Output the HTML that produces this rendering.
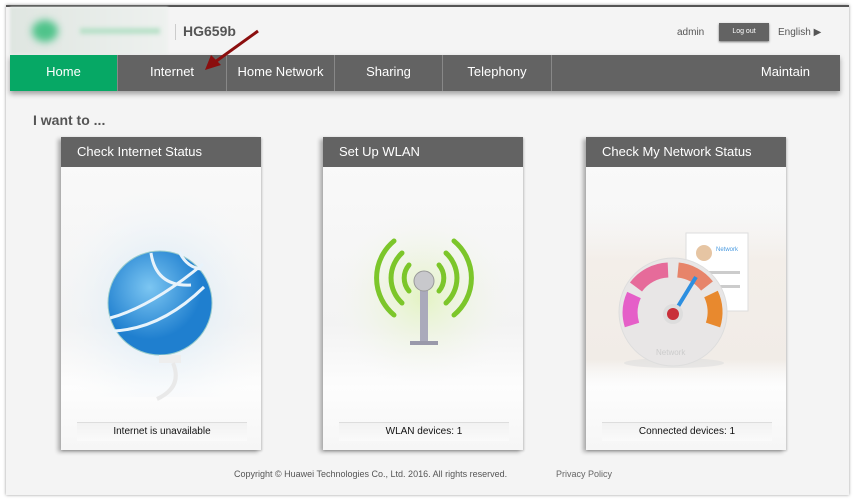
<!DOCTYPE html>
<html><head><meta charset="utf-8"><style>
*{margin:0;padding:0;box-sizing:border-box}
body{width:855px;height:503px;background:#fff;font-family:"Liberation Sans",sans-serif;position:relative;overflow:hidden}
.frame{position:absolute;left:6px;top:5px;width:843px;height:490px;background:#f4f4f4;border-top:2px solid #555;box-shadow:0 0 3px #999}
.a{position:absolute}
.nav{left:10px;top:55px;width:830px;height:36px;background:#636363;box-shadow:0 3px 5px rgba(0,0,0,.35)}
.nav div{position:absolute;top:0;height:36px;line-height:34px;color:#fff;font-size:13px;text-align:center;border-right:1px solid #888}
.card{position:absolute;top:137px;width:200px;height:313px;background:linear-gradient(#fafafa,#f3f3f3 60%,#fdfdfd 80%,#f6f6f6);box-shadow:-3px 2px 4px rgba(0,0,0,.3),1px 1px 2px rgba(0,0,0,.2)}
.card .h{height:30px;background:#636363;color:#fff;font-size:13px;line-height:29px;padding-left:16px}
.card .s{position:absolute;left:16px;top:285px;width:170px;height:19px;border-top:1px solid #ddd;background:linear-gradient(#f2f2f2,#fafafa);font-size:10px;text-align:center;line-height:18px;color:#111}
.card svg{position:absolute;left:0;top:30px}
</style></head><body>
<div class="frame"></div>
<div class="a" style="left:10px;top:7px;width:158px;height:47px;background:linear-gradient(90deg,#dfe6e1,#eef1ef);filter:blur(1px)"></div>
<div class="a" style="left:32px;top:20px;width:26px;height:22px;border-radius:50%;background:#4fc38a;filter:blur(4px)"></div>
<div class="a" style="left:80px;top:28px;width:80px;height:6px;background:#b8e0c8;filter:blur(2px)"></div>
<div class="a" style="left:175px;top:24px;width:1px;height:16px;background:#ccc"></div>
<div class="a" style="left:183px;top:23px;font-size:14px;font-weight:bold;color:#555">HG659b</div>
<div class="a" style="left:677px;top:27px;font-size:10px;color:#555">admin</div>
<div class="a" style="left:719px;top:23px;width:50px;height:18px;background:#636363;color:#fff;font-size:7px;text-align:center;line-height:18px;box-shadow:0 1px 2px #777">Log out</div>
<div class="a" style="left:778px;top:27px;font-size:10px;color:#555">English &#9654;</div>
<div class="a nav">
<div style="left:0;width:108px;background:#06a865">Home</div>
<div style="left:108px;width:109px">Internet</div>
<div style="left:217px;width:108px">Home Network</div>
<div style="left:325px;width:108px">Sharing</div>
<div style="left:433px;width:109px">Telephony</div>
<div style="left:542px;width:288px;text-align:right;padding-right:30px;border:0">Maintain</div>
</div>
<svg class="a" style="left:195px;top:28px" width="70" height="50"><line x1="63" y1="3" x2="20" y2="34" stroke="#8b0e0e" stroke-width="3"/><polygon points="10,42 16,27 26,37" fill="#8b0e0e"/></svg>
<div class="a" style="left:33px;top:112px;font-size:14px;font-weight:bold;color:#555">I want to ...</div>

<div class="card" style="left:61px"><div class="h">Check Internet Status</div>
<svg width="200" height="250"><defs><radialGradient id="g1" cx="40%" cy="35%"><stop offset="0" stop-color="#7cc6f2"/><stop offset="1" stop-color="#1f7fcf"/></radialGradient><radialGradient id="b1" cx="50%" cy="55%" r="60%"><stop offset="0" stop-color="#cfe6f7"/><stop offset="1" stop-color="#fafafa" stop-opacity="0"/></radialGradient></defs>
<rect x="0" y="20" width="200" height="210" fill="url(#b1)"/>
<circle cx="99" cy="136" r="52" fill="url(#g1)" stroke="#9cc" stroke-width="1"/>
<path d="M49 151 Q90 140 142 97 M52 164 Q100 162 143 120 M90 86 Q95 120 130 118 M118 84 Q125 100 140 102" stroke="#e8f3fb" stroke-width="3" fill="none"/>
<rect x="98" y="188" width="22" height="8" fill="#eee"/>
<path d="M112 196 Q122 220 96 232" stroke="#e9e9e9" stroke-width="4" fill="none"/></svg>
<div class="s">Internet is unavailable</div></div>

<div class="card" style="left:323px"><div class="h">Set Up WLAN</div>
<svg width="200" height="250"><defs><radialGradient id="b2" cx="50%" cy="50%"><stop offset="0" stop-color="#e3f3c2"/><stop offset="1" stop-color="#f6f6f6" stop-opacity="0"/></radialGradient></defs>
<ellipse cx="100" cy="130" rx="95" ry="90" fill="url(#b2)"/>
<g stroke="#7cc62a" stroke-width="5" fill="none" stroke-linecap="round"><path d="M86 124 A20 20 0 0 1 86 98"/><path d="M79 136 A34 34 0 0 1 79 86"/><path d="M71 148 A48 48 0 0 1 71 74"/><path d="M116 124 A20 20 0 0 0 116 98"/><path d="M123 136 A34 34 0 0 0 123 86"/><path d="M131 148 A48 48 0 0 0 131 74"/></g>
<rect x="97" y="115" width="8" height="60" fill="#aab"/><rect x="87" y="174" width="28" height="4" fill="#99a"/>
<circle cx="101" cy="114" r="10" fill="#c8c8cc" stroke="#999"/></svg>
<div class="s">WLAN devices: 1</div></div>

<div class="card" style="left:586px"><div class="h">Check My Network Status</div>
<svg width="200" height="250"><defs><linearGradient id="b3" x1="0" y1="0" x2="0" y2="1"><stop offset="0" stop-color="#f6f4f2" stop-opacity="0"/><stop offset=".3" stop-color="#f3eee9"/><stop offset=".85" stop-color="#f1ece7"/><stop offset="1" stop-color="#fafafa" stop-opacity="0"/></linearGradient></defs>
<rect x="0" y="40" width="200" height="180" fill="url(#b3)"/>
<rect x="100" y="66" width="62" height="78" fill="#fff" stroke="#ddd"/><circle cx="118" cy="86" r="8" fill="#e6c5a3"/><text x="130" y="84" font-size="6" fill="#4a9be0" font-family="Liberation Sans">Network</text>
<rect x="110" y="104" width="44" height="3" fill="#ccc"/><rect x="110" y="118" width="44" height="3" fill="#ccc"/>
<ellipse cx="88" cy="196" rx="50" ry="5" fill="#ddd" opacity=".6"/>
<circle cx="87" cy="145" r="54" fill="#e8e6e6" stroke="#ddd"/>
<g fill="none" stroke-width="15"><path d="M46 158 A42 42 0 0 1 48 128" stroke="#e55fc8"/><path d="M50 120 A42 42 0 0 1 82 103" stroke="#e66b9a"/><path d="M92 103 A42 42 0 0 1 121 119" stroke="#e7846a"/><path d="M125 127 A42 42 0 0 1 127 158" stroke="#e8892e"/></g>
<path d="M88 146 L110 110" stroke="#2d8fe0" stroke-width="4"/><circle cx="87" cy="147" r="10" fill="#ddd"/><circle cx="87" cy="147" r="6" fill="#c9303a"/>
<text x="70" y="188" font-size="8" fill="#ccc" font-family="Liberation Sans">Network</text></svg>
<div class="s">Connected devices: 1</div></div>

<div class="a" style="left:234px;top:469px;font-size:9px;color:#555">Copyright © Huawei Technologies Co., Ltd. 2016. All rights reserved.</div>
<div class="a" style="left:556px;top:469px;font-size:9px;color:#666">Privacy Policy</div>
</body></html>
